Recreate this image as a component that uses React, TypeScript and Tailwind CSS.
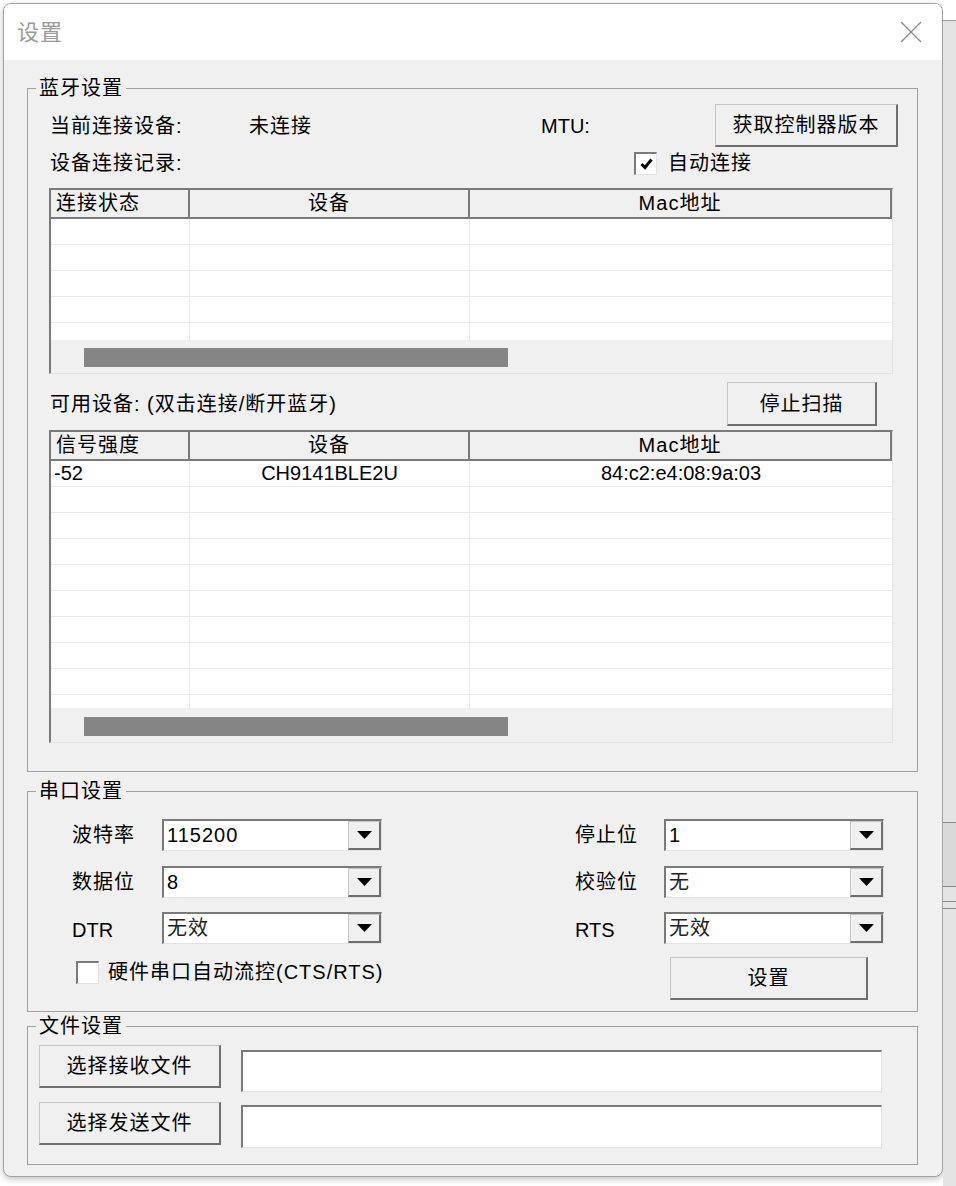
import type { ReactNode } from "react";

const sunken =
  "border-t-2 border-l-2 border-t-[#7a7a7a] border-l-[#7a7a7a] border-r border-b border-r-[#e3e3e3] border-b-[#e3e3e3]";
const raised =
  "border-t border-l border-t-[#c4c4c4] border-l-[#c4c4c4] border-r-2 border-b-2 border-r-[#6e6e6e] border-b-[#6e6e6e] bg-[#f0f0f0]";
const zh = "text-[20px] tracking-[1px]";

const Group = ({ title, className, children }: { title: string; className: string; children: ReactNode }) => (
  <fieldset className={`ml-[23px] mr-[24px] border border-[#a0a0a0] ${className}`}>
    <legend className={`ml-[8px] px-[3px] leading-[20px] ${zh}`}>{title}</legend>
    {children}
  </fieldset>
);

const Button = ({ label, className }: { label: string; className: string }) => (
  <button className={`flex items-center justify-center ${raised} ${zh} ${className}`}>{label}</button>
);

const Arrow = () => (
  <svg width="15" height="8" viewBox="0 0 15 8">
    <path d="M0 0 L15 0 L7.5 8 Z" fill="#000" />
  </svg>
);

const Combo = ({ value, cjk }: { value: string; cjk?: boolean }) => (
  <div className={`flex h-[32px] w-[220px] bg-white ${sunken}`}>
    <span className={`flex-1 pl-[3px] leading-[29px] ${cjk ? `${zh} text-[#222]` : "text-[20px]"}`}>{value}</span>
    <span className={`flex w-[33px] items-center justify-center ${raised}`}>
      <Arrow />
    </span>
  </div>
);

const CheckBox = ({ checked }: { checked?: boolean }) => (
  <span className={`flex h-[23px] w-[23px] items-center justify-center bg-white ${sunken}`}>
    {checked && (
      <svg width="13" height="12" viewBox="0 0 13 12">
        <path d="M1.5 6 L5 9.5 L11.5 1.5" fill="none" stroke="#000" strokeWidth="3" />
      </svg>
    )}
  </span>
);

type Row = [string, string, string];

const Table = ({
  head,
  rows,
  bodyH,
  scrollH,
}: {
  head: string;
  rows: Row[];
  bodyH: string;
  scrollH: string;
}) => {
  const filled = [...rows];
  while (filled.length < 10) filled.push(["", "", ""]);
  return (
    <div className={`w-[844px] bg-[#f0f0f0] ${sunken}`}>
      <div className={`flex h-[29px] leading-[27px] ${zh}`}>
        <div className="w-[139px] border-r-2 border-b-2 border-[#7a7a7a] pl-[5px]">{head}</div>
        <div className="w-[280px] border-r-2 border-b-2 border-[#7a7a7a] text-center">设备</div>
        <div className="flex-1 border-r-2 border-b-2 border-[#7a7a7a] text-center">Mac地址</div>
      </div>
      <div className={`overflow-hidden bg-white ${bodyH}`}>
        {filled.map((r, i) => (
          <div key={i} className="flex h-[26px] border-b border-[#ebebeb] text-[20px] leading-[25px]">
            <div className="w-[139px] border-r border-[#ebebeb] pl-[3px]">{r[0]}</div>
            <div className="w-[280px] border-r border-[#ebebeb] text-center">{r[1]}</div>
            <div className="flex-1 text-center">{r[2]}</div>
          </div>
        ))}
      </div>
      <div className={`pl-[33px] ${scrollH}`}>
        <div className="h-[19px] w-[424px] bg-[#858585]" />
      </div>
    </div>
  );
};

const App = () => {
  return (
    <div className="flex h-[1186px] w-[956px] overflow-hidden bg-white font-['Liberation_Sans','Noto_Sans_CJK_SC',sans-serif] text-black">
      <div className="pl-[3px] pt-[3px]">
        <div className="w-[940px] overflow-hidden rounded-[8px] border border-[#a3a3a3] bg-[#f0f0f0] shadow-[0_2px_6px_rgba(0,0,0,0.25)]">
          {/* title bar */}
          <div className="flex h-[56px] items-center justify-between bg-white pl-[13px] pr-[20px]">
            <span className="text-[22px] tracking-[1px] text-[#9b9b9b]">设置</span>
            <svg width="22" height="22" viewBox="0 0 22 22">
              <path d="M1 1 L21 21 M21 1 L1 21" stroke="#8c8c8c" strokeWidth="1.4" />
            </svg>
          </div>

          {/* bluetooth */}
          <Group title="蓝牙设置" className="mt-[18px] pb-[28px]">
            <div className="px-[21px]">
              <div className={`mt-[6px] flex h-[43px] items-center ${zh}`}>
                <span className="w-[200px] pl-[1px]">当前连接设备:</span>
                <span className="w-[292px]">未连接</span>
                <span className="flex-1 tracking-normal">MTU:</span>
                <Button label="获取控制器版本" className="-mr-[2px] h-[43px] w-[183px]" />
              </div>
              <div className={`mt-[4px] flex h-[24px] items-center ${zh}`}>
                <span className="w-[585px] pl-[1px]">设备连接记录:</span>
                <CheckBox checked />
                <span className="ml-[11px]">自动连接</span>
              </div>
              <div className="mt-[13px]">
                <Table head="连接状态" rows={[]} bodyH="h-[121px]" scrollH="h-[33px] pt-[8px]" />
              </div>
              <div className={`mt-[8px] flex h-[44px] items-center ${zh}`}>
                <span className="pl-[1px]">可用设备: (双击连接/断开蓝牙)</span>
                <Button label="停止扫描" className="ml-auto mr-[19px] h-[44px] w-[150px]" />
              </div>
              <div className="mt-[4px]">
                <Table
                  head="信号强度"
                  rows={[["-52", "CH9141BLE2U", "84:c2:e4:08:9a:03"]]}
                  bodyH="h-[247px]"
                  scrollH="h-[34px] pt-[9px]"
                />
              </div>
            </div>
          </Group>

          {/* serial */}
          <Group title="串口设置" className="mt-[9px] pb-[11px]">
            <div className={`pl-[44px] ${zh}`}>
              <div className="mt-[18px] flex items-center">
                <span className="w-[90px]">波特率</span>
                <Combo value="115200" />
                <span className="ml-[193px] w-[89px]">停止位</span>
                <Combo value="1" />
              </div>
              <div className="mt-[15px] flex items-center">
                <span className="w-[90px]">数据位</span>
                <Combo value="8" />
                <span className="ml-[193px] w-[89px]">校验位</span>
                <Combo value="无" cjk />
              </div>
              <div className="mt-[13px] flex items-center">
                <span className="w-[90px] pt-[4px] tracking-normal">DTR</span>
                <Combo value="无效" cjk />
                <span className="ml-[193px] w-[89px] pt-[4px] tracking-normal">RTS</span>
                <Combo value="无效" cjk />
              </div>
              <div className="mt-[12px] flex items-start">
                <div className="ml-[4px] mt-[3px] flex h-[24px] items-center">
                  <CheckBox />
                  <span className="ml-[9px]">硬件串口自动流控(CTS/RTS)</span>
                </div>
                <Button label="设置" className="ml-auto mr-[49px] h-[43px] w-[198px]" />
              </div>
            </div>
          </Group>

          {/* files */}
          <Group title="文件设置" className="mb-[11px] mt-[4px] pb-[16px]">
            <div className="pl-[11px]">
              <div className="mt-[9px] flex items-start">
                <Button label="选择接收文件" className="h-[43px] w-[182px]" />
                <div className={`ml-[20px] mt-[5px] h-[42px] w-[641px] bg-white ${sunken}`} />
              </div>
              <div className="mt-[10px] flex items-start">
                <Button label="选择发送文件" className="h-[43px] w-[182px]" />
                <div className={`ml-[20px] mt-[3px] h-[43px] w-[641px] bg-white ${sunken}`} />
              </div>
            </div>
          </Group>
        </div>
      </div>

      {/* window behind */}
      <div className="flex flex-1 flex-col">
        <div className="h-[21px] border-b border-[#9a9a9a] bg-white" />
        <div className="flex flex-1 flex-col bg-[#e4e4e4]">
          <div className="h-[801px]" />
          <div className="h-[65px] border-y border-[#8a8a8a] bg-[#d9d9d9]" />
          <div className="h-[14px]" />
          <div className="h-[8px] border-y border-[#8a8a8a]" />
        </div>
      </div>
    </div>
  );
};

export default App;
